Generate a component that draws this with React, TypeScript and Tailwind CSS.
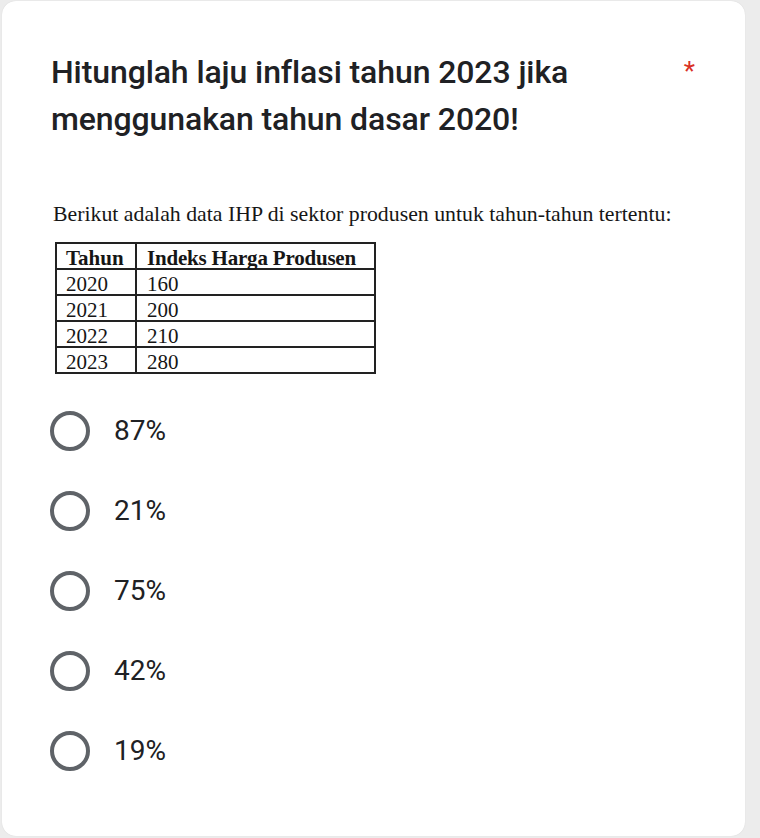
export default function App() {
  const rows = [
    ["2020", "160"],
    ["2021", "200"],
    ["2022", "210"],
    ["2023", "280"],
  ];
  const options = ["87%", "21%", "75%", "42%", "19%"];

  return (
    <div className="h-[838px] w-[760px] bg-[#ececec] pl-[2px] pt-[1px] pb-[2px] pr-[15px]">
      <div className="h-full rounded-[14px] bg-white shadow-[0_0_1px_rgba(0,0,0,0.15)] font-['Roboto',sans-serif]">
        <div className="flex pl-[49px] pr-[50px] pt-[48px]">
          <h1 className="w-[600px] text-[32px] font-medium leading-[47px] tracking-[-0.1px] text-[#202124]">
            Hitunglah laju inflasi tahun 2023 jika menggunakan tahun dasar 2020!
          </h1>
          <span className="ml-auto mt-[2px] text-[26px] leading-[40px] text-[#d93025]">*</span>
        </div>

        <div className="mt-[59px] pl-[51px] font-['Liberation_Serif',serif] text-[#161616]">
          <p className="whitespace-nowrap text-[21.8px] leading-[24px]">
            Berikut adalah data IHP di sektor produsen untuk tahun-tahun tertentu:
          </p>
          <table className="mt-[16px] ml-[2px] w-[321px] table-fixed border-collapse border-2 border-[#222] text-[21px] leading-[20px]">
            <thead>
              <tr className="h-[26px]">
                <th className="w-[80px] whitespace-nowrap border-2 border-[#222] pl-[9px] text-left align-bottom font-bold">Tahun</th>
                <th className="whitespace-nowrap border-2 border-[#222] pl-[10px] text-left align-bottom font-bold tracking-[-0.2px]">Indeks Harga Produsen</th>
              </tr>
            </thead>
            <tbody>
              {rows.map(([y, v]) => (
                <tr key={y} className="h-[26px]">
                  <td className="border-2 border-[#222] pl-[9px] align-bottom">{y}</td>
                  <td className="border-2 border-[#222] pl-[10px] align-bottom">{v}</td>
                </tr>
              ))}
            </tbody>
          </table>
        </div>

        <div className="mt-[37px] flex flex-col gap-[40px] pl-[48px]">
          {options.map((o) => (
            <label key={o} className="flex h-[40px] items-center gap-[24px]">
              <span className="h-[40px] w-[40px] rounded-full border-[4px] border-[#5f6368]" />
              <span className="text-[28px] text-[#202124]">{o}</span>
            </label>
          ))}
        </div>
      </div>
    </div>
  );
}
